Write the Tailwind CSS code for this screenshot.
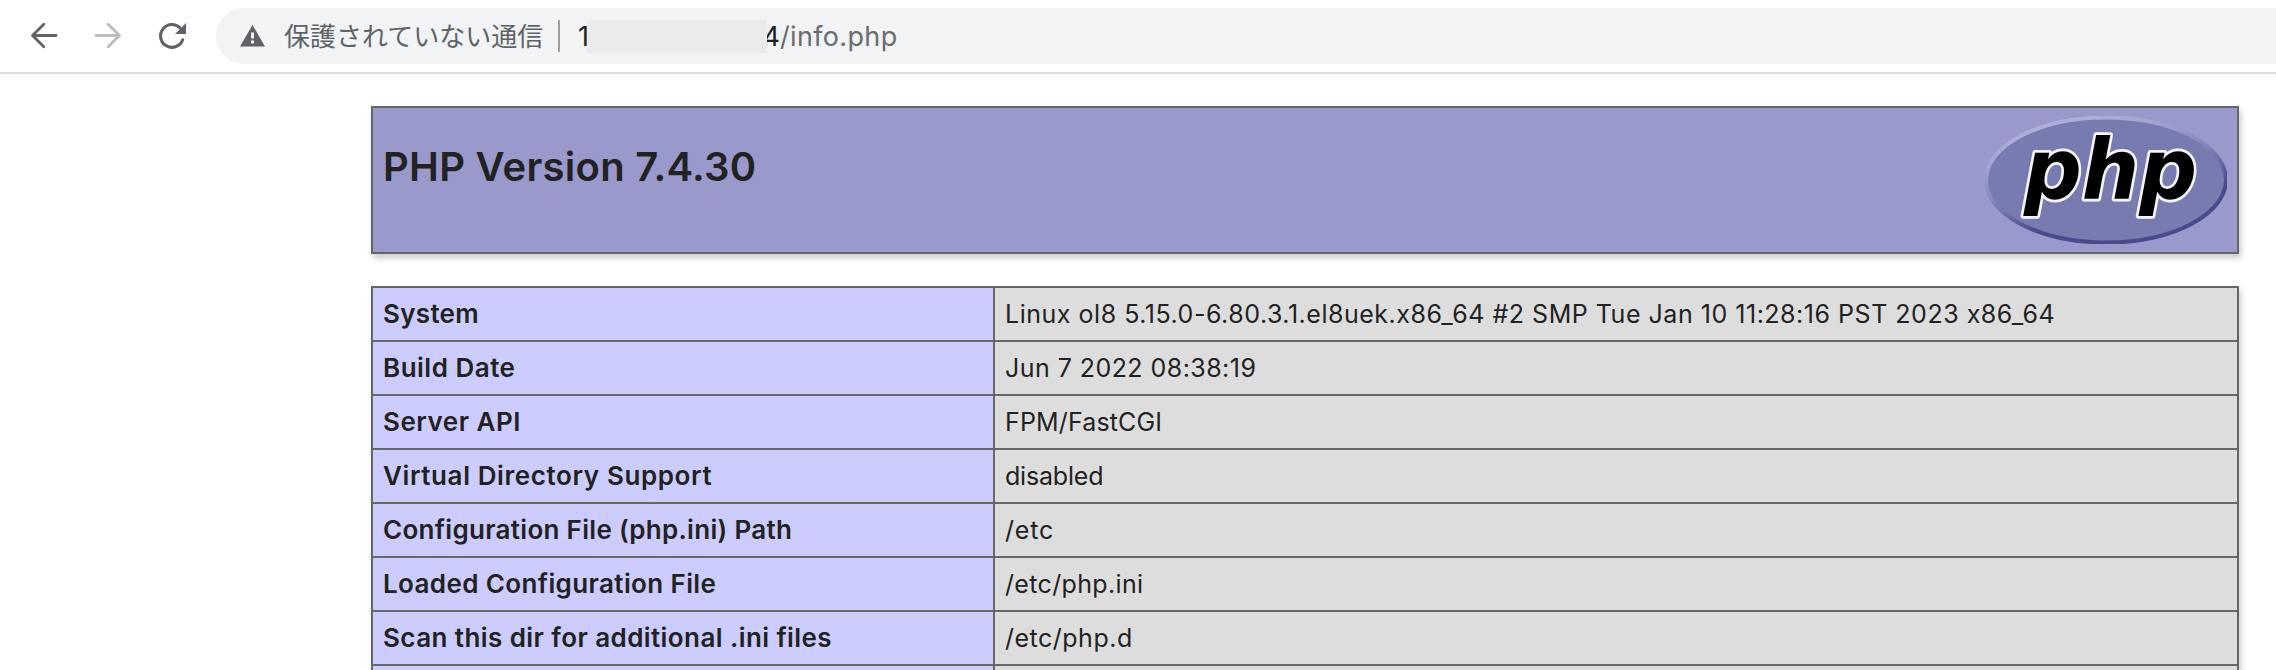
<!DOCTYPE html>
<html lang="ja">
<head>
<meta charset="utf-8">
<title>phpinfo()</title>
<script src="https://cdn.jsdelivr.net/npm/@tailwindcss/browser@4"></script>
</head>
<body class="h-[670px] overflow-hidden bg-white font-['Inter','Noto_Sans_CJK_JP',sans-serif] text-[#222222]">
<header class="flex h-[74px] items-start border-b-2 border-[#dcdcdc] pl-[28px] pt-2">
  <div class="flex h-14 w-[188px] shrink-0 items-center gap-8">
    <svg class="size-8" viewBox="0 0 32 32" fill="none" stroke="#5f6368" stroke-width="2.8" stroke-linecap="round" stroke-linejoin="round"><path d="M28 15.5H4.5M15.8 4.3L4.5 15.5L15.8 26.7"/></svg>
    <svg class="size-8" viewBox="0 0 32 32" fill="none" stroke="#babcbe" stroke-width="2.8" stroke-linecap="round" stroke-linejoin="round"><path d="M4 15.5H27.5M16.2 4.3L27.5 15.5L16.2 26.7"/></svg>
    <svg class="size-8" viewBox="0 0 32 32"><path d="M26.7 19.8A11.4 11.4 0 1 1 23.8 7.6" fill="none" stroke="#5f6368" stroke-width="3.1" stroke-linecap="round"/><path d="M30 3V14H19Z" fill="#5f6368"/></svg>
  </div>
  <div class="flex h-14 flex-1 items-center rounded-l-full bg-[#f1f3f4] pl-6">
    <svg class="h-[22px] w-[25px] shrink-0" viewBox="0 0 25 22"><path d="M12.5 0L25 21.5H0Z" fill="#5f6368"/><path d="M11 7.5h3v6h-3zM11 15.5h3v3h-3z" fill="#f1f3f4"/></svg>
    <span class="ml-[19px] w-[274px] whitespace-nowrap pb-0.5 font-['Noto_Sans_CJK_JP',sans-serif] text-[26px] leading-[54px] text-[#5f6368]">保護されていない通信</span>
    <span class="h-8 w-0.5 bg-[#9b9ea2]"></span>
    <span class="ml-[18px] w-[9px] pt-0.5 text-[27px] text-[#202124]">1</span>
    <span class="z-10 h-[33px] w-[180px] bg-[#ebebeb]"></span>
    <span class="flex w-[13px] justify-end pt-0.5 text-[27px] text-[#202124]">4</span>
    <span class="pt-0.5 text-[27px] tracking-[0.35px] text-[#6a6c6f]">/info.php</span>
  </div>
</header>
<main class="ml-[371px] mt-8 w-[1868px]">
  <section class="flex h-[148px] items-start justify-between border-2 border-[#666666] bg-[#9999cc] pl-2.5 pr-2.5 pt-2 shadow-[2px_4px_6px_#cccccc]">
    <h1 class="pt-[28px] text-[40px] font-semibold leading-[46px] tracking-[0.25px]">PHP Version 7.4.30</h1>
    <svg class="h-32 w-[242px]" viewBox="0 0 242 128">
      <defs><linearGradient id="rim" x1=".25" y1="0" x2=".75" y2="1"><stop offset="0" stop-color="#b3b2db"/><stop offset=".22" stop-color="#a3a3d0"/><stop offset=".48" stop-color="#7d80b6"/><stop offset=".72" stop-color="#484a8c"/><stop offset="1" stop-color="#484a8c"/></linearGradient></defs>
      <ellipse cx="121" cy="64" rx="120" ry="62.5" fill="#787bb0" stroke="url(#rim)" stroke-width="4"/>
      <text x="39" y="83" font-family="DejaVu Sans" font-size="84" font-weight="700" font-style="italic" textLength="173" lengthAdjust="spacingAndGlyphs" fill="#000" stroke="#f4f4f8" stroke-width="5.5" stroke-linejoin="round" paint-order="stroke">php</text>
    </svg>
  </section>
  <table class="mt-8 w-full table-fixed border-collapse text-left text-[25px] leading-[52px] shadow-[2px_4px_6px_#cccccc] [&_td]:border-2 [&_td]:border-[#666666] [&_td]:bg-[#dddddd] [&_td]:p-0 [&_td]:pl-2.5 [&_th]:border-2 [&_th]:border-[#666666] [&_th]:bg-[#ccccff] [&_th]:p-0 [&_th]:pl-2.5 [&_th]:text-[26px] [&_th]:font-semibold">
    <colgroup><col class="w-[622px]"><col></colgroup>
    <tbody>
      <tr class="h-[54px]"><th class="tracking-[0.3px]">System</th><td class="tracking-[0.52px]">Linux ol8 5.15.0-6.80.3.1.el8uek.x86_64 #2 SMP Tue Jan 10 11:28:16 PST 2023 x86_64</td></tr>
      <tr class="h-[54px]"><th class="tracking-[0.5px]">Build Date</th><td class="tracking-[0.45px]">Jun 7 2022 08:38:19</td></tr>
      <tr class="h-[54px]"><th class="tracking-[0.5px]">Server API</th><td class="tracking-[0.15px]">FPM/FastCGI</td></tr>
      <tr class="h-[54px]"><th class="tracking-[0.6px]">Virtual Directory Support</th><td class="tracking-[-0.2px]">disabled</td></tr>
      <tr class="h-[54px]"><th class="tracking-[0.3px]">Configuration File (php.ini) Path</th><td class="tracking-[0.8px]">/etc</td></tr>
      <tr class="h-[54px]"><th class="tracking-[0.38px]">Loaded Configuration File</th><td class="tracking-[0.35px]">/etc/php.ini</td></tr>
      <tr class="h-[54px]"><th class="tracking-[0.42px]">Scan this dir for additional .ini files</th><td class="tracking-[0.5px]">/etc/php.d</td></tr>
      <tr class="h-[5px] [&>*]:border-b-0!"><th></th><td></td></tr>
    </tbody>
  </table>
</main>
</body>
</html>
